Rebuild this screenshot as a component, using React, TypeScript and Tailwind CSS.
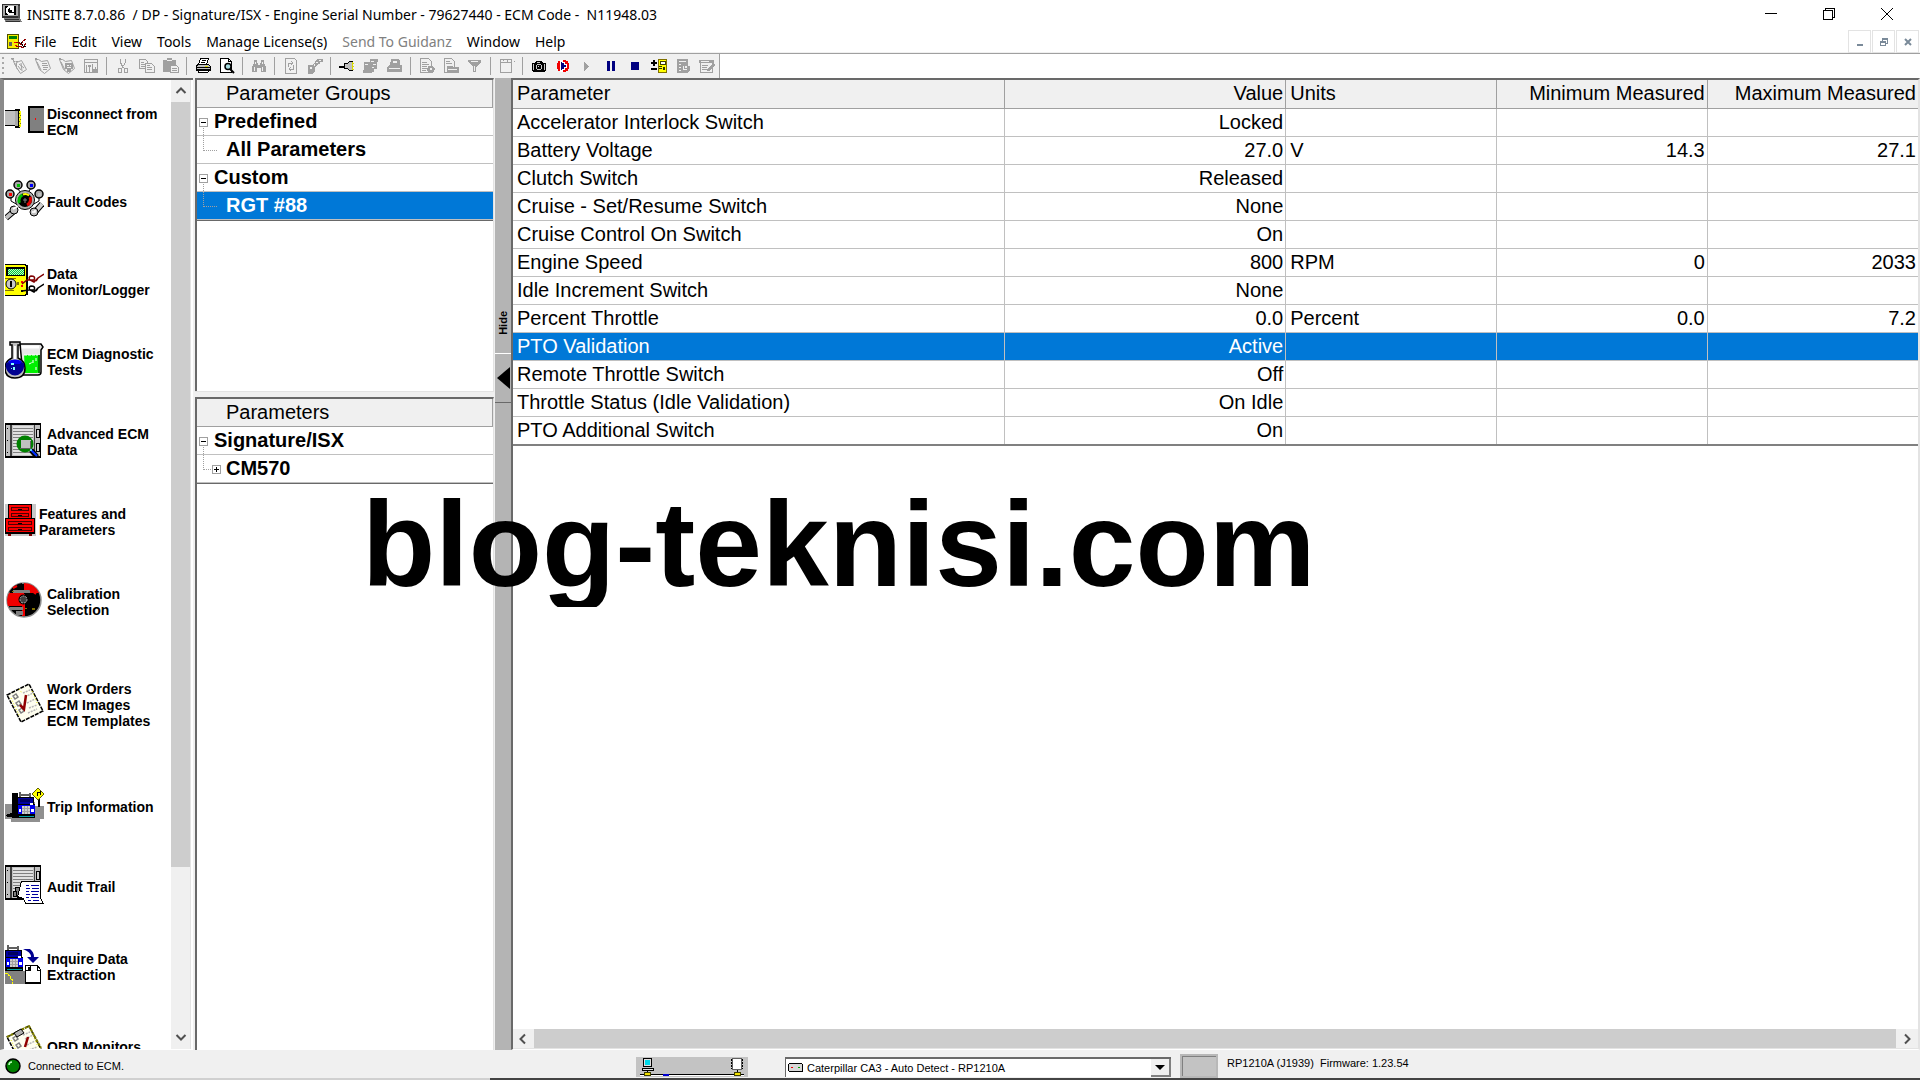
import React from "react";

type Glyph = () => React.ReactElement;

const G = "#a0a0a0";

/* ---------- toolbar glyphs (16 x 16) ---------- */

function Tool({ children }: { children: React.ReactNode }) {
  return (
    <svg width="16" height="16" viewBox="0 0 16 16" shapeRendering="crispEdges" fill="none" stroke={G} strokeWidth="1">
      {children}
    </svg>
  );
}

const ConnectA: Glyph = () => (
  <Tool>
    <path d="M0.5 1.5h2v2h2M5.5 4.5l5-2 5 9-6 4-4-6z M2.5 3.5l4 8M8 6l5 4M7 8l3 4M10 5l1 8M3 6l2 0" shapeRendering="auto" />
    <path d="M0 0h3v1h-3zM5 3h2v1h-2z" fill={G} stroke="none" />
  </Tool>
);
const ConnectB: Glyph = () => (
  <Tool>
    <path d="M0.5 1.5h3l3 2 6-1 3 8-6 5-5-4zM2 4l4 8" shapeRendering="auto" />
    <path d="M7 5h5v1h-5zM7 7h6v1h-6zM8 9h5v1h-5zM8 11h4v1h-4zM0 0h2v2h-2z" fill={G} stroke="none" />
  </Tool>
);
const ConnectC: Glyph = () => (
  <Tool>
    <path d="M0.5 1.5h3l3 2 6-1 3 8-6 5-5-4zM2 4l4 8" shapeRendering="auto" />
    <path d="M6 5h8v6h-8zM8 11h4v3h-4zM0 0h2v2h-2z" fill={G} stroke="none" />
    <path d="M8 7h2v1h-2zM11 7h1v1h-1zM8 9h4v1h-4z" fill="#f0f0f0" stroke="none" />
  </Tool>
);
const ChartFrame: Glyph = () => (
  <Tool>
    <path d="M1.5 1.5h13v13h-13zM1.5 4.5h13M3.5 7v7M6.5 8v6M9.5 6v8M12.5 9v5" />
    <path d="M5 7h3v2h-3zM9 11h5v3h-5z" fill={G} stroke="none" />
  </Tool>
);
const Cut: Glyph = () => (
  <Tool>
    <path d="M5.5 0.5v4l3 6M10.5 0.5v4l-4 6" />
    <path d="M3.5 10.5h3v4h-3zM9.5 10.5h3v4h-3z" />
  </Tool>
);
const Copy: Glyph = () => (
  <Tool>
    <path d="M0.5 1.5h6l2 2v7h-8zM2 4.500h3M2 6.500h4M2 8.500h4" />
    <path d="M6.500 5.500h6l3 3v6h-9z" fill="#f0f0f0" />
    <path d="M8 9.500h5M8 11.500h5M8 7.500h3" />
  </Tool>
);
const Paste: Glyph = () => (
  <Tool>
    <path d="M0 2h4v-2h5v2h4v12h-13z" fill={G} stroke="none" />
    <path d="M4 2h5v1h-5z" fill="#f0f0f0" stroke="none" />
    <path d="M7.500 7.500h6l2 2v5h-8zM9 10.500h5M9 12.500h5" fill="#f0f0f0" />
  </Tool>
);
const Printer: Glyph = () => (
  <Tool>
    <g stroke="#000">
      <path d="M5.500 0.500h8l-2 6h-8z" fill="#fff" />
      <path d="M7 2.500h4M6 4.500h4" />
      <path d="M2.500 6.500h11l2 2v4h-14v-4z" fill="#c0c0c0" />
      <path d="M1 9.500h14M3.500 12.500v2h9l2-2" fill="#fff" />
      <path d="M1 11.500h14" strokeWidth="2" />
    </g>
    <path d="M10 8h3v1h-3z" fill="#dede00" stroke="none" />
  </Tool>
);
const Preview: Glyph = () => (
  <Tool>
    <g stroke="#000">
      <path d="M1.500 0.500h8l3 3v11h-11z" fill="#fff" />
      <path d="M9.500 0.500v3h3" />
      <circle cx="9" cy="8.500" r="3" fill="#a9dfe3" shapeRendering="auto" strokeWidth="1.500" />
      <path d="M11 11l4 4" strokeWidth="2" shapeRendering="auto" />
    </g>
  </Tool>
);
const Binoculars: Glyph = () => (
  <Tool>
    <path d="M3 2h3v3h1v2h2v-2h1v-3h3v3l2 4v5h-5v-4h-4v4h-5v-5l2-4z" fill={G} stroke="none" />
    <path d="M3 9h1v4h-1zM11 9h1v4h-1zM4 4h1v2h-1zM11 4h1v2h-1z" fill="#f0f0f0" stroke="none" />
  </Tool>
);
const Refresh: Glyph = () => (
  <Tool>
    <path d="M2.500 0.500h9l2 2v13h-11z" />
    <path d="M5.500 9v-4h4M8 3l2 2-2 2M10.500 7v4h-4M8 9l-2 2 2 2" />
  </Tool>
);
const Wrench: Glyph = () => (
  <Tool>
    <path d="M1 7h5l4-6h6v3h-3v2h-2l-3 4v4l-3 2h-4v-4z" fill={G} stroke="none" />
    <path d="M9 4h2v1h-2zM3 9h2v2h-2zM7 6h1v2h-1zM12 2h2v1h-2z" fill="#f0f0f0" stroke="none" />
  </Tool>
);
const Plug: Glyph = () => (
  <Tool>
    <path d="M0 8.500h5" stroke="#000" strokeWidth="2" />
    <path d="M5.500 5.500h3l2-2h3v9h-3l-2-2h-3z" fill="#c0c0c0" stroke="#000" />
    <path d="M13 4h1v8h-1zM14 5h1v1h-1zM14 8h1v1h-1zM14 11h1v1h-1z" fill="#d8d800" stroke="none" />
  </Tool>
);
const Upload: Glyph = () => (
  <Tool>
    <path d="M1 4h6v10h-6zM7 1h8v3h-1v7h-3v3h-4zM0 12h9v3h-9z" fill={G} stroke="none" />
    <path d="M8 3h3v1h-3zM10 6h3v1h-3zM2 6h3v1h-3zM9 9h2v1h-2z" fill="#f0f0f0" stroke="none" />
  </Tool>
);
const PrintDim: Glyph = () => (
  <Tool>
    <path d="M4 1h7l2 2v4h2v7h-15v-5l3-2z" fill={G} stroke="none" />
    <path d="M6 3h4v2h-4zM2 10h11v1h-11z" fill="#f0f0f0" stroke="none" />
  </Tool>
);
const PageA: Glyph = () => (
  <Tool>
    <path d="M1.500 0.500h8l3 3v11h-11zM3 4.500h5M3 6.500h7M3 8.500h5M3 10.500h5M3 12.500h4" />
    <path d="M9 8h5l2 3-2 4h-4l-2-3z" fill={G} stroke="none" />
    <path d="M11 10h2v2h-2z" fill="#f0f0f0" stroke="none" />
  </Tool>
);
const PageB: Glyph = () => (
  <Tool>
    <path d="M1.500 0.500h7l3 3v11h-10zM3 3.500h4M3 5.500h6" />
    <path d="M4 8h5l1 1h6v6h-12z" fill={G} stroke="none" />
    <path d="M5 11h9v1h-9z" fill="#f0f0f0" stroke="none" />
  </Tool>
);
const Funnel: Glyph = () => (
  <Tool>
    <path d="M1 2h13v2l-5 5v5h-3v-5l-5-5z" fill={G} stroke="none" />
    <path d="M4 3h7v1h-7zM7 8h1v5h-1z" fill="#f0f0f0" stroke="none" />
  </Tool>
);
const Sheet: Glyph = () => (
  <Tool>
    <path d="M1.500 1.500h11v13h-11zM1.500 4.500h11M8.500 1v3M4 2.500h1M15 3.500h1" />
  </Tool>
);
const Camera: Glyph = () => (
  <Tool>
    <path d="M1 5h3l1-2h6l1 2h3v8h-1v1h-12v-1h-1v-8z" fill="#000" stroke="none" />
    <path d="M6 6h4v1h-4zM6 11h4v1h-4zM5 7h1v4h-1zM10 7h1v4h-1zM2 6h1v6h-1zM13 6h1v6h-1zM6 4h3v1h-3zM7 8h1v1h-1z" fill="#c8c8c8" stroke="none" />
  </Tool>
);
const Record: Glyph = () => (
  <Tool>
    <path d="M5 2h6v1h2v2h1v6h-1v2h-2v1h-6v-1h-2v-2h-1v-6h1v-2h2z" fill="#f00000" stroke="none" />
    <path d="M5 2h3v2h2v2h2v4h-2v2h-2v2h-3z" fill="#fff" stroke="none" />
    <path d="M6 4h1v1h2v2h2v2h-2v2h-2v1h-1z" fill="#000080" stroke="none" />
  </Tool>
);
const Play: Glyph = () => (
  <Tool>
    <path d="M5 3v11l5-5.500z" fill={G} stroke="none" />
  </Tool>
);
const Pause: Glyph = () => (
  <Tool>
    <path d="M4 3h3v10h-3zM9 3h3v10h-3z" fill="#000080" stroke="none" />
  </Tool>
);
const Stop: Glyph = () => (
  <Tool>
    <path d="M4 4h8v8h-8z" fill="#000080" stroke="none" />
  </Tool>
);
const MeterTool: Glyph = () => (
  <Tool>
    <path d="M0 4h6v2h-6zM2 2h2v6h-2zM0 10h6v2h-6z" fill="#000" stroke="none" />
    <path d="M7.500 1.500h8v13h-8z" fill="#ffff00" stroke="#807000" />
    <path d="M9 3h5v3h-5z" fill="#fff" stroke="#404000" />
    <path d="M8 8h3v1h-3zM8 10h3v1h-3zM12 9h2v3h-2z" fill="#303000" stroke="none" />
  </Tool>
);
const MeterDim: Glyph = () => (
  <Tool>
    <path d="M2 1h11v7h2v4l-2 3h-11z" fill={G} stroke="none" />
    <path d="M4 3h7v1h-7zM4 6h2v1h-2zM8 8h4v4h-4zM4 9h2v1h-2zM4 12h2v1h-2z" fill="#f0f0f0" stroke="none" />
    <path d="M9.500 8v2.500h2" />
  </Tool>
);
const NoteEdit: Glyph = () => (
  <Tool>
    <path d="M1.500 3.500h12v11h-12zM3 7.500h6M3 9.500h5M3 11.500h5" />
    <path d="M0 2h15v3h-15zM14 5l2 2-6 6h-2v-2z" fill={G} stroke="none" />
    <path d="M2 3h8v1h-8z" fill="#f0f0f0" stroke="none" />
  </Tool>
);

const toolGroups: { name: string; glyph: Glyph }[][] = [
  [
    { name: "Connect", glyph: ConnectA },
    { name: "Template", glyph: ConnectB },
    { name: "Work order", glyph: ConnectC },
    { name: "Chart", glyph: ChartFrame },
  ],
  [
    { name: "Cut", glyph: Cut },
    { name: "Copy", glyph: Copy },
    { name: "Paste", glyph: Paste },
  ],
  [
    { name: "Print", glyph: Printer },
    { name: "Print preview", glyph: Preview },
  ],
  [{ name: "Find", glyph: Binoculars }],
  [
    { name: "Refresh", glyph: Refresh },
    { name: "Adjust", glyph: Wrench },
  ],
  [
    { name: "Disconnect", glyph: Plug },
    { name: "Send to ECM", glyph: Upload },
    { name: "Print to file", glyph: PrintDim },
  ],
  [
    { name: "Report", glyph: PageA },
    { name: "Open report", glyph: PageB },
    { name: "Filter", glyph: Funnel },
  ],
  [{ name: "New window", glyph: Sheet }],
  [
    { name: "Snapshot", glyph: Camera },
    { name: "Record", glyph: Record },
    { name: "Play", glyph: Play },
    { name: "Pause", glyph: Pause },
    { name: "Stop", glyph: Stop },
    { name: "Monitor setup", glyph: MeterTool },
    { name: "Monitor timer", glyph: MeterDim },
    { name: "Edit note", glyph: NoteEdit },
  ],
];

/* ---------- side bar pictures ---------- */

const DisconnectPic: Glyph = () => (
  <svg width="39" height="28" viewBox="0 0 39 28" shapeRendering="crispEdges">
    <path d="M0 5h10v14h-10z" fill="#c0c0c0" />
    <path d="M0 4h10v-1h5v19h-5v-2h-10v-1h10v-14h-10z" fill="#000" />
    <path d="M10 5h3v15h-3z" fill="#a8a8a8" />
    <path d="M14 5h2v16h-2z" fill="#ffff00" />
    <path d="M14 7h1v1h-1zM15 9h1v1h-1zM14 11h1v1h-1zM15 13h1v1h-1zM14 15h1v1h-1zM15 17h1v1h-1zM14 19h1v1h-1z" fill="#808000" />
    <path d="M23 0h16v2h-14v23h14v2h-16z" fill="#000" />
    <path d="M25 2h14v23h-14z" fill="#808080" />
    <path d="M30 12h1v2h-1z" fill="#ff0000" />
  </svg>
);

const FaultPic: Glyph = () => (
  <svg width="39" height="41" viewBox="0 0 39 41">
    <path d="M6 15v6l7 4M34 15v6l-7 4M12 8l5 6M26 8l-4 6" stroke="#000" fill="none" />
    {[
      [5, 14, "#ff0000"],
      [13, 5, "#00c000"],
      [26, 5, "#0000ff"],
      [34, 14, "#c0c0c0"],
    ].map(([x, y, c]) => (
      <g key={String(x)}>
        <circle cx={x} cy={y} r="4" fill="#a8a8a8" stroke="#000" strokeWidth="1.500" />
        <path d={`M${Number(x) - 1} ${Number(y) - 1}h3v3h-3z`} fill={String(c)} />
      </g>
    ))}
    <circle cx="20" cy="20" r="9.500" fill="#b0b0b0" stroke="#000" strokeWidth="1" />
    <circle cx="20" cy="20" r="7" fill="#000" />
    <path d="M14.500 23a6 6 0 0 1 3-8" stroke="#00c000" strokeWidth="3" fill="none" />
    <path d="M18 14.500a6 6 0 0 1 6 1" stroke="#ffff00" strokeWidth="2" fill="none" />
    <path d="M25 17a6 6 0 0 1-3 8" stroke="#e00000" strokeWidth="3" fill="none" />
    <path d="M20 18v5M18 20h4" stroke="#808080" strokeWidth="1" />
    <path d="M1 38l7-6" stroke="#000" strokeWidth="6" />
    <path d="M1 38l7-6" stroke="#c0c0c0" strokeWidth="4" />
    <circle cx="9" cy="30" r="4" fill="#c0c0c0" stroke="#000" />
    <path d="M8 29l5-3" stroke="#fff" strokeWidth="2" />
    <path d="M30 32l7-8" stroke="#000" strokeWidth="6" />
    <path d="M30 32l7-8" stroke="#d0d0d0" strokeWidth="4" />
    <circle cx="29" cy="32" r="4" fill="#c0c0c0" stroke="#000" />
    <path d="M27 32h3v-2" stroke="#fff" strokeWidth="1.500" fill="none" />
  </svg>
);

const MeterPic: Glyph = () => (
  <svg width="39" height="32" viewBox="0 0 39 32" shapeRendering="crispEdges">
    <path d="M0 0h21v1h2v30h-2v1h-21z" fill="#000" />
    <path d="M0 1h20v1h1v28h-1v1h-20z" fill="#ffff00" />
    <path d="M1 3h19v9h-19z" fill="#000" />
    <path d="M3 5h16v6h-16z" fill="#c0ffc0" />
    <path d="M3 5.500h16M3 7.500h16M3 9.500h16" stroke="#00c040" strokeDasharray="1 1" />
    <path d="M4 6.500h15M4 8.500h15M4 10.500h15" stroke="#00c040" strokeDasharray="1 1" />
    <path d="M0 14.500h11M0 26.500h9" stroke="#807000" />
    <circle cx="6" cy="20" r="5" fill="#c8c8c8" stroke="#000" shapeRendering="auto" />
    <path d="M5 17h2v6h-2z" fill="#000" />
    <path d="M12 18h2v3h-2z" fill="#807000" />
    <path d="M16 17h2v2h-2zM16 21h2v2h-2z" fill="#ff0000" />
    <path d="M16 26h2v2h-2z" fill="#000" />
    <g fill="none" shapeRendering="auto" strokeWidth="1.500">
      <path d="M17 20l5-4h7q2-4-3-4-3 1-1 4l4 2 4-4 6-4M33 14l-2 3" stroke="#800000" />
      <path d="M17 27l7-1h5q2-4-3-4-3 1-1 4l4 2 4-4 6-4M33 24l-2 3" stroke="#000" />
    </g>
  </svg>
);

const FlaskPic: Glyph = () => (
  <svg width="39" height="38" viewBox="0 0 39 38">
    <path d="M15 3h21l2 3-2 3v22q0 3-3 3H18z" fill="#e8e8e8" stroke="#000" strokeWidth="1.500" />
    <path d="M17 6h17" stroke="#fff" strokeWidth="3" />
    <path d="M19 14h15v16q0 2-2 2H20z" fill="#00f000" />
    <path d="M19 14h14M31 17v4M28 19v3M24 23l4-2M31 26v3" stroke="#fff" strokeDasharray="3 1" />
    <path d="M34 14v18" stroke="#008000" strokeWidth="2" />
    <path d="M5 1h10v3h-2v13q7 3 7 10 0 10-10 10T0 27q0-7 7-10V4H5z" fill="#c0c0c0" stroke="#000" strokeWidth="1.500" />
    <path d="M9 5h2v13H9z" fill="#fff" />
    <path d="M1 22q9-5 18 0 1 6-3 10-6 5-12 0-4-4-3-10z" fill="#000090" />
    <path d="M3 20q7-3 14 0l-2 3H5z" fill="#0000f0" />
    <path d="M6 22h3v2H6zM8 26h2v3H8zM6 27h1v1H6z" fill="#80ffff" />
  </svg>
);

const EcmBody = () => (
  <>
    <path d="M0 0h36v35H0z" fill="#000" />
    <path d="M1 2h34v31H1z" fill="#c0c0c0" />
    <path d="M5 2h2v31H5zM29 2h1v31h-1z" fill="#404040" />
    <path d="M8 3h20v29H8z" fill="#e0e0e0" />
    <path d="M8 5.500h20M8 8.500h20M8 11.500h20M8 14.500h20M8 17.500h20M8 20.500h20M8 23.500h20M8 26.500h20M8 29.500h20" stroke="#808080" />
    <path d="M2 5h1v1H2zM2 17h1v1H2zM2 29h1v1H2z" fill="#000" />
    <path d="M31.500 6.500h3v8h-3zM31.500 20.500h3v8h-3z" fill="#d0d0d0" stroke="#000" />
  </>
);

const AdvancedPic: Glyph = () => (
  <svg width="39" height="35" viewBox="0 0 39 35" shapeRendering="crispEdges">
    <EcmBody />
    <circle cx="20" cy="21" r="8.500" fill="#008000" shapeRendering="auto" />
    <path d="M16 17h10v8H16z" fill="#c0c0c0" />
    <path d="M15 25h10v-7" stroke="#606060" fill="none" strokeWidth="1" />
    <path d="M26 27l6 7" stroke="#000" strokeWidth="5" shapeRendering="auto" />
    <path d="M26 27l6 6" stroke="#0030ff" strokeWidth="2" shapeRendering="auto" />
    <path d="M25 26h2v2h-2z" fill="#60d0ff" />
  </svg>
);

const DrawersPic: Glyph = () => (
  <svg width="31" height="32" viewBox="0 0 31 32" shapeRendering="crispEdges">
    <path d="M0 0h31v32H0z" fill="#c8c8c8" />
    <path d="M3 0h24v14h3v16H0V14h3z" fill="#000" />
    <path d="M4 1h22v13H4zM1 15h28v13H1z" fill="#ff0000" />
    <path d="M6.500 3.500h17v3h-17zM6.500 9.500h17v3h-17zM3.500 17.500h23v3h-23zM3.500 23.500h23v3h-23z" fill="#f00000" stroke="#500000" />
    <path d="M13 5h4v1h-4zM13 11h4v1h-4zM13 19h4v1h-4zM13 25h4v1h-4z" fill="#000" />
    <path d="M3 30h3v2H3zM24 30h3v2h-3z" fill="#800000" />
  </svg>
);

const DiscPic: Glyph = () => (
  <svg width="39" height="36" viewBox="0 0 39 36">
    <circle cx="19" cy="18" r="17" fill="#000" stroke="#909090" strokeWidth="1.500" />
    <path d="M19 1a17 17 0 0 1 15 10H4a17 17 0 0 0-1 13h14v10a17 17 0 0 0 3 0V12h-1z" fill="#f00000" />
    <path d="M4 10q5-8 13-9v10z" fill="#000" />
    <path d="M8 8h17v3H8zM5 25h13v3H5zM11 29h7v4h-7z" fill="#808080" />
    <path d="M23 6l8 6M8 6l4-2" stroke="#f00000" strokeWidth="2" />
    <path d="M27 26h3v2h-3zM7 9h2v1H7zM20 26h2v1h-2z" fill="#807000" />
    <circle cx="18.500" cy="17.500" r="5" fill="#000" />
    <circle cx="18.500" cy="17.500" r="3.500" fill="#404040" stroke="#b0b0b0" strokeDasharray="2 1" />
  </svg>
);

const ClipPage = () => (
  <>
    <path d="M2 12L24 1l14 27-22 11z" fill="#fffff0" stroke="#000" strokeWidth="1.500" strokeDasharray="4 1" />
    <path d="M8 13l3-2 2 3-3 2zM11 20l3-2 2 3-3 2zM14 27l3-2 2 3-3 2z" fill="none" stroke="#808080" strokeWidth="1.500" />
    <path d="M18 10l7-3M20 14l8-4M22 20l8-4M24 25l8-3M23 30l9-4" stroke="#b8b8b8" strokeWidth="1.500" strokeDasharray="2 1" />
    <path d="M6 15l9 19M14 6l3 4M27 8l6 14" stroke="#e8e800" strokeDasharray="1 2" />
  </>
);

const WorkPic: Glyph = () => (
  <svg width="39" height="40" viewBox="0 0 39 40">
    <ClipPage />
    <path d="M15 22l4 4 2-14" stroke="#900000" strokeWidth="2.500" fill="none" />
  </svg>
);

const Truck = () => (
  <>
    <path d="M3 6V1h1M13 6V1M3 3h10" stroke="#606060" fill="none" strokeWidth="2" />
    <path d="M0 5h17v5l1 3v13H0z" fill="#000" />
    <path d="M1 6h15v6H1z" fill="#0000a0" />
    <path d="M3 7h10v3H3z" fill="#000060" />
    <path d="M1 13h17v9H1z" fill="#0000f0" />
    <path d="M5 14h8v8H5z" fill="#d0d0d0" />
    <path d="M7.500 14v8M10.500 14v8M5 16.500h8M5 19.500h8" stroke="#a0a0a0" />
    <path d="M2 17h2v3H2zM14 17h3v3h-3zM13 11h3v2h-3z" fill="#fff" />
    <path d="M2 24h15v1H2z" fill="#00a0a0" />
  </>
);

const TripPic: Glyph = () => (
  <svg width="39" height="34" viewBox="0 0 39 34" shapeRendering="crispEdges">
    <path d="M0 16h8v-2h22v4h9v13h-4v3H6v-3H0z" fill="#909090" />
    <path d="M0 27l6-2h2v4H3z" fill="#000" />
    <path d="M7 5h6v25H7z" fill="#000" />
    <g transform="translate(12 4)">
      <Truck />
    </g>
    <path d="M33.500 11v8" stroke="#000" strokeWidth="2" />
    <path d="M33 0l6 6-6 6-6-6z" fill="#ffff00" stroke="#606000" shapeRendering="auto" />
    <path d="M32.500 8V4.500h3M35.500 3v4" stroke="#000" fill="none" />
  </svg>
);

const AuditPic: Glyph = () => (
  <svg width="39" height="40" viewBox="0 0 39 40" shapeRendering="crispEdges">
    <EcmBody />
    <path d="M0 35h18v5H0zM30 17h8v6h-8z" fill="#fff" />
    <path d="M10 22h8v10h-6zM8 26h3v5H8z" fill="#808080" stroke="#000" />
    <path d="M16.500 16.500h19v17l3 5h-18l-2-5-6-2z" fill="#fff" stroke="#000" />
    <path d="M21 20.500h3M26 20.500h8M21 23.500h4M27 23.500h7M21 26.500h3M26 26.500h8M21 29.500h4M27 29.500h6M21 32.500h3M26 32.500h8M23 35.500h3M28 35.500h6" stroke="#0000a0" />
  </svg>
);

const InquirePic: Glyph = () => (
  <svg width="39" height="40" viewBox="0 0 39 40" shapeRendering="crispEdges">
    <path d="M0 26h20v13H0z" fill="#808080" />
    <path d="M0 28h3v2h2v4h2v5" stroke="#ffff00" fill="none" strokeDasharray="3 1" />
    <Truck />
    <path d="M18 4h7q4 3 4 8h5l-6 6-6-6h4q0-5-8-8z" fill="#000090" shapeRendering="auto" />
    <path d="M20.500 20.500h12l3 4v13h-15z" fill="#fff" stroke="#000" />
    <path d="M32 20v5h4M20 38h16" stroke="#000" fill="none" strokeWidth="1" />
    <path d="M20.500 20.500h5v5h-5zM23 22h1v2h-1z" fill="#fff" stroke="#000" />
  </svg>
);

const ObdPic: Glyph = () => (
  <svg width="39" height="40" viewBox="0 0 39 40">
    <ClipPage />
    <path d="M2 12L24 1l12 22" fill="none" stroke="#808000" strokeWidth="2" strokeDasharray="3 1" />
    <path d="M9 8l7-4 3 4-7 4z" fill="#b0b0b0" stroke="#000" />
    <path d="M20 22l3-10" stroke="#900000" strokeWidth="2.500" />
  </svg>
);

const sideItems: { lines: string[]; pic: Glyph; tall?: boolean }[] = [
  { lines: ["Disconnect from", "ECM"], pic: DisconnectPic },
  { lines: ["Fault Codes"], pic: FaultPic },
  { lines: ["Data", "Monitor/Logger"], pic: MeterPic },
  { lines: ["ECM Diagnostic", "Tests"], pic: FlaskPic },
  { lines: ["Advanced ECM", "Data"], pic: AdvancedPic },
  { lines: ["Features and", "Parameters"], pic: DrawersPic },
  { lines: ["Calibration", "Selection"], pic: DiscPic },
  { lines: ["Work Orders", "ECM Images", "ECM Templates"], pic: WorkPic, tall: true },
  { lines: ["Trip Information"], pic: TripPic },
  { lines: ["Audit Trail"], pic: AuditPic },
  { lines: ["Inquire Data", "Extraction"], pic: InquirePic },
  { lines: ["OBD Monitors"], pic: ObdPic },
];

const menus = ["File", "Edit", "View", "Tools", "Manage License(s)", "Send To Guidanz", "Window", "Help"];

const rows: { name: string; value: string; units?: string; min?: string; max?: string; selected?: boolean }[] = [
  { name: "Accelerator Interlock Switch", value: "Locked" },
  { name: "Battery Voltage", value: "27.0", units: "V", min: "14.3", max: "27.1" },
  { name: "Clutch Switch", value: "Released" },
  { name: "Cruise - Set/Resume Switch", value: "None" },
  { name: "Cruise Control On Switch", value: "On" },
  { name: "Engine Speed", value: "800", units: "RPM", min: "0", max: "2033" },
  { name: "Idle Increment Switch", value: "None" },
  { name: "Percent Throttle", value: "0.0", units: "Percent", min: "0.0", max: "7.2" },
  { name: "PTO Validation", value: "Active", selected: true },
  { name: "Remote Throttle Switch", value: "Off" },
  { name: "Throttle Status (Idle Validation)", value: "On Idle" },
  { name: "PTO Additional Switch", value: "On" },
];

function AppIcon() {
  return (
    <svg width="20" height="20" viewBox="0 0 20 20" shapeRendering="crispEdges">
      <path d="M0 0h18v14H0z" fill="#303030" />
      <path d="M1 1h15v11H1z" fill="#a8a8a8" />
      <path d="M3 2h11v9H3z" fill="#000" />
      <path d="M12 3H7L5 5v3l2 2h5M8 5h3v3" fill="none" stroke="#fff" strokeWidth="1.500" />
      <path d="M2 14h16l2 4H3z" fill="#808080" />
      <path d="M3 15h14M4 17h14" stroke="#303030" />
      <path d="M16 2h2v12h-2z" fill="#505050" />
    </svg>
  );
}

function MenuIcon() {
  return (
    <svg width="20" height="16" viewBox="0 0 20 16" shapeRendering="crispEdges">
      <path d="M0 0h12v15H0z" fill="#505000" />
      <path d="M1 1h10v13H1z" fill="#f8f000" />
      <path d="M2 2h8v3H2z" fill="#008000" />
      <path d="M2 8h3v4H2z" fill="#606060" />
      <path d="M7 8h2v1H7zM8 11h2v1H8z" fill="#f00000" />
      <path d="M9 8h3l2 3 2-4 3-2M9 12h4l3 2 3-5" stroke="#900000" fill="none" />
      <path d="M14 8l2 4 3 1" stroke="#000" fill="none" />
    </svg>
  );
}

function Chevron({ d }: { d: string }) {
  return (
    <svg width="12" height="12" viewBox="0 0 12 12" fill="none" stroke="#505050" strokeWidth="2">
      <path d={d} />
    </svg>
  );
}

function TreeMark({ kind }: { kind: "open" | "leaf" | "closed" }) {
  return (
    <svg width="26" height="28" viewBox="0 0 26 28" shapeRendering="crispEdges" className="block shrink-0">
      {kind === "open" ? (
        <>
          <path d="M2.500 10.500h8v8h-8z" fill="#fff" stroke={G} />
          <path d="M4 14.500h5" stroke="#000" />
          <path d="M6.500 20v8" stroke={G} strokeDasharray="1 1" />
        </>
      ) : (
        <path d={kind === "leaf" ? "M6.500 0v15M7 14.500h13" : "M6.500 0v15M7 14.500h8"} stroke={G} strokeDasharray="1 1" />
      )}
      {kind === "closed" && (
        <>
          <path d="M15.500 10.500h8v8h-8z" fill="#fff" stroke={G} />
          <path d="M17 14.500h5M19.500 12v5" stroke="#000" />
        </>
      )}
    </svg>
  );
}

function TreePanel({
  title,
  nodes,
}: {
  title: string;
  nodes: { label: string; kind: "open" | "leaf" | "closed"; selected?: boolean }[];
}) {
  return (
    <div className="h-full border-t-2 border-l-2 border-t-[#696969] border-l-[#696969] border-r border-r-[#e3e3e3] bg-white">
      <h2 className="h-7 border-b border-r border-[#a0a0a0] bg-[#f0f0f0] pl-[29px] leading-[27px]">{title}</h2>
      <ul className="border-b border-[#696969] font-bold">
        {nodes.map((n) => (
          <li
            key={n.label}
            className={
              n.selected
                ? "flex h-7 items-center border-b border-[#c0c0c0] bg-[#0078d7] text-white"
                : "flex h-7 items-center border-b border-[#c0c0c0]"
            }
          >
            <div className={n.kind === "open" ? "flex w-4 overflow-hidden" : "flex w-[29px]"}>
              <TreeMark kind={n.kind} />
            </div>
            <span className={n.kind === "open" ? "pl-px leading-[27px]" : "leading-[27px]"}>{n.label}</span>
          </li>
        ))}
      </ul>
    </div>
  );
}

export default function App() {
  return (
    <div className="relative flex h-screen flex-col overflow-hidden bg-white font-['Liberation_Sans',Arial,sans-serif] text-black">
      <header className="flex h-7 shrink-0 items-center pl-[2px] font-['Noto_Sans','Segoe_UI',sans-serif] text-[14px]">
        <AppIcon />
        <h1 className="ml-[5px] flex-1 whitespace-pre">
          INSITE 8.7.0.86{"  "}/ DP - Signature/ISX - Engine Serial Number - 79627440 - ECM Code -{"  "}N11948.03
        </h1>
        <div className="flex pr-1">
          <button aria-label="Minimize" className="flex h-7 w-[58px] items-center justify-center">
            <svg width="12" height="12" viewBox="0 0 12 12" stroke="#000" shapeRendering="crispEdges"><path d="M0 5.500h12" /></svg>
          </button>
          <button aria-label="Restore" className="flex h-7 w-[58px] items-center justify-center">
            <svg width="12" height="12" viewBox="0 0 12 12" fill="none" stroke="#000" shapeRendering="crispEdges"><path d="M0.500 2.500h9v9h-9zM2.500 2.500v-2h9v9h-2" /></svg>
          </button>
          <button aria-label="Close" className="flex h-7 w-[58px] items-center justify-center">
            <svg width="12" height="12" viewBox="0 0 12 12" stroke="#000"><path d="M0 0l12 12M12 0L0 12" /></svg>
          </button>
        </div>
      </header>

      <nav className="flex h-[25px] shrink-0 items-center border-b border-[#f0f0f0] pt-[3px] pl-[7px] font-['Noto_Sans','Segoe_UI',sans-serif] text-[14px]">
        <MenuIcon />
        <div className="ml-[7px] flex flex-1 gap-[15px]">
          {menus.map((m) => (
            <button key={m} className={m === "Send To Guidanz" ? "whitespace-nowrap text-[#808080]" : "whitespace-nowrap"}>
              {m}
            </button>
          ))}
        </div>
        <div className="flex gap-px pr-px">
          <button aria-label="Minimize window" className="flex size-[23px] items-center justify-center border border-[#e3e3e3]">
            <svg width="10" height="10" viewBox="0 0 10 10" shapeRendering="crispEdges"><path d="M2 7h6v2H2z" fill="#7a8a99" /></svg>
          </button>
          <button aria-label="Restore window" className="flex size-[23px] items-center justify-center border border-[#e3e3e3]">
            <svg width="10" height="10" viewBox="0 0 10 10" fill="none" stroke="#7a8a99" shapeRendering="crispEdges"><path d="M1.500 5.500h5v3h-5zM1 4.500h6M3.500 4v-2h5v4H7M3 1.500h6" /></svg>
          </button>
          <button aria-label="Close window" className="flex size-[23px] items-center justify-center border border-[#e3e3e3]">
            <svg width="10" height="10" viewBox="0 0 10 10" stroke="#7a8a99" strokeWidth="2"><path d="M2 2l6 6M8 2L2 8" /></svg>
          </button>
        </div>
      </nav>

      <div className="flex h-[25px] shrink-0 border-t border-[#a0a0a0]">
        <div className="flex items-center border-r border-[#a0a0a0] bg-[#f0f0f0] pl-px" role="toolbar" aria-label="Main toolbar">
          <svg width="6" height="20" viewBox="0 0 6 20" shapeRendering="crispEdges">
            <path d="M2 1v19" stroke="#a8a8a8" strokeWidth="2" strokeDasharray="2 3" />
          </svg>
          {toolGroups.map((group, i) => (
            <React.Fragment key={group[0].name}>
              {i > 0 && <div className="mr-[4px] ml-[3px] h-[18px] w-px bg-[#a0a0a0]" />}
              {group.map(({ name, glyph: Icon }) => (
                <button key={name} aria-label={name} className="flex h-6 w-6 items-center justify-center">
                  <Icon />
                </button>
              ))}
            </React.Fragment>
          ))}
        </div>
      </div>

      <main className="flex min-h-0 flex-1 bg-[#f0f0f0]">
        <aside className="flex w-[193px] shrink-0 border-t-2 border-b border-l-4 border-t-[#696969] border-b-white border-l-[#8a8a8a]">
          <nav className="flex-1 overflow-hidden bg-white">
            <ul className="flex flex-col pt-[2px] text-[14px] leading-4 font-bold">
              {sideItems.map(({ lines, pic: Pic, tall }) => (
                <li key={lines[0]} className={tall ? "h-[125px] shrink-0" : "h-20 shrink-0"}>
                  <button className="flex h-full w-full items-center gap-[3px] pl-px text-left">
                    <span className="mb-1">
                      <Pic />
                    </span>
                    <span className="whitespace-nowrap">
                      {lines.map((l) => (
                        <span key={l} className="block">{l}</span>
                      ))}
                    </span>
                  </button>
                </li>
              ))}
            </ul>
          </nav>
          <div className="flex w-[19px] shrink-0 flex-col bg-[#f0f0f0]">
            <button aria-label="Scroll up" className="flex h-[22px] items-center justify-center">
              <Chevron d="M1.500 8l4.500-4.500L10.500 8" />
            </button>
            <div className="flex flex-1 flex-col">
              <div className="grow-[766] bg-[#cdcdcd]" />
              <div className="grow-[158]" />
            </div>
            <button aria-label="Scroll down" className="flex h-[24px] items-center justify-center">
              <Chevron d="M1.500 4l4.500 4.500L10.500 4" />
            </button>
          </div>
          <div className="w-[3px] border-l border-[#e3e3e3] bg-white" />
        </aside>

        <div className="ml-[2px] flex w-[299px] shrink-0 flex-col text-[20px]">
          <section className="h-[314px] border-b border-[#e3e3e3]">
            <TreePanel
              title="Parameter Groups"
              nodes={[
                { label: "Predefined", kind: "open" },
                { label: "All Parameters", kind: "leaf" },
                { label: "Custom", kind: "open" },
                { label: "RGT #88", kind: "leaf", selected: true },
              ]}
            />
          </section>
          <section className="mt-[5px] min-h-0 flex-1">
            <TreePanel
              title="Parameters"
              nodes={[
                { label: "Signature/ISX", kind: "open" },
                { label: "CM570", kind: "closed" },
              ]}
            />
          </section>
        </div>

        <div className="ml-px flex w-4 shrink-0 flex-col bg-[#b4b4b4]">
          <div className="flex h-[276px] items-end justify-center border-b border-white pb-[18px]">
            <span className="rotate-180 text-[11px] leading-none font-bold [writing-mode:vertical-rl]">Hide</span>
          </div>
          <button aria-label="Hide panel" className="flex h-[49px] items-center justify-center border-b border-[#696969]">
            <svg width="13" height="22" viewBox="0 0 13 22"><path d="M13 0v22L0 11z" /></svg>
          </button>
        </div>

        <section className="flex min-w-0 flex-1 flex-col border-t-2 border-r-2 border-b border-l-2 border-t-[#696969] border-r-[#e3e3e3] border-b-white border-l-[#696969] bg-white">
          <table className="w-full table-fixed border-collapse text-[20px] leading-[27px]">
            <colgroup>
              <col className="w-[35%]" />
              <col className="w-[20%]" />
              <col className="w-[15%]" />
              <col className="w-[15%]" />
              <col className="w-[15%]" />
            </colgroup>
            <thead>
              <tr className="h-7 border-b border-[#a0a0a0] bg-[#f0f0f0]">
                <th className="border-r border-[#a0a0a0] p-0 pl-1 text-left font-normal">Parameter</th>
                <th className="border-r border-[#a0a0a0] p-0 pr-[2px] text-right font-normal">Value</th>
                <th className="border-r border-[#a0a0a0] p-0 pl-1 text-left font-normal">Units</th>
                <th className="border-r border-[#a0a0a0] p-0 pr-[2px] text-right font-normal">Minimum Measured</th>
                <th className="p-0 pr-[2px] text-right font-normal">Maximum Measured</th>
              </tr>
            </thead>
            <tbody className="border-b-2 border-[#808080]">
              {rows.map((r) => (
                <tr
                  key={r.name}
                  className={r.selected ? "h-7 border-b border-[#c0c0c0] bg-[#0078d7] text-white" : "h-7 border-b border-[#c0c0c0]"}
                >
                  <td className="border-r border-[#c0c0c0] p-0 pl-1">{r.name}</td>
                  <td className="border-r border-[#c0c0c0] p-0 pr-[2px] text-right">{r.value}</td>
                  <td className="border-r border-[#c0c0c0] p-0 pl-1">{r.units}</td>
                  <td className="border-r border-[#c0c0c0] p-0 pr-[2px] text-right">{r.min}</td>
                  <td className="p-0 pr-[2px] text-right">{r.max}</td>
                </tr>
              ))}
            </tbody>
          </table>
          <div className="flex-1" />
          <div className="flex h-[19px] bg-[#f0f0f0]">
            <button aria-label="Scroll left" className="flex w-[21px] items-center justify-center pr-[2px]">
              <Chevron d="M8 1.500L3.500 6 8 10.500" />
            </button>
            <div className="flex-1 bg-[#cdcdcd]" />
            <button aria-label="Scroll right" className="flex w-[22px] items-center justify-center">
              <Chevron d="M4 1.500L8.500 6 4 10.500" />
            </button>
          </div>
          <div className="h-px bg-[#e3e3e3]" />
        </section>
      </main>

      <footer className="flex h-7 shrink-0 items-center bg-[#f0f0f0] pt-1 text-[11px]">
        <div className="flex w-[636px] shrink-0 items-center gap-[7px] pl-[5px]">
          <svg width="16" height="16" viewBox="0 0 16 16">
            <circle cx="8" cy="8" r="7" fill="#008000" stroke="#000" strokeWidth="1.500" />
            <path d="M4 7q0-3 3-3" stroke="#c0ffc0" strokeWidth="1.500" fill="none" />
          </svg>
          <span>Connected to ECM.</span>
        </div>
        <svg width="112" height="20" viewBox="0 0 112 20" shapeRendering="crispEdges" className="mt-[2px] shrink-0 bg-[#c3c3c3]">
          <path d="M4 17h104v2H4z" fill="#fff" />
          <path d="M4 17.500h104" stroke="#000" />
          <path d="M7.500 1.500h8v8h-8zM6 11.500h11v2H6z" fill="#e0e0e0" stroke="#000" />
          <path d="M9 3h5v5H9z" fill="#00d8e8" />
          <path d="M96.500 1.500h9v11h-9z" fill="#fff" stroke="#606060" />
          <path d="M95.500 2v10M106.500 2v10" stroke="#000" strokeDasharray="2 1" />
          <path d="M11.500 13v3M101.500 13v3" stroke="#000" />
          <path d="M8.500 15.500h6v3h-6zM98.500 15.500h6v3h-6z" fill="#f0e000" stroke="#404000" />
          <path d="M27 17h6v2h-6z" fill="#0000d0" />
        </svg>
        <div className="mt-[2px] ml-[37px] flex h-5 w-[386px] shrink-0 items-center border-t-2 border-l border-[#696969] bg-white">
          <svg width="16" height="12" viewBox="0 0 16 12" shapeRendering="crispEdges" className="ml-[2px] shrink-0">
            <path d="M1.500 1.500h12l1 1v7h-13l-1-1v-6z" fill="#d8d8d8" stroke="#000" />
            <path d="M3 5h2v1H3z" fill="#f00000" />
            <path d="M10 5h2v1h-2z" fill="#00a000" />
          </svg>
          <select aria-label="Adapter" className="h-full flex-1 appearance-none bg-white pl-[3px] text-[11px]" defaultValue="ca3">
            <option value="ca3">Caterpillar CA3 - Auto Detect - RP1210A</option>
          </select>
          <span className="pointer-events-none flex h-full w-5 items-center justify-center border-r-2 border-b-2 border-[#808080] bg-[#f0f0f0]">
            <svg width="10" height="5" viewBox="0 0 10 5"><path d="M0 0h10L5 5z" /></svg>
          </span>
        </div>
        <div className="ml-[9px] h-6 w-[38px] shrink-0 border-2 border-[#b8b8b8] bg-[#c3c3c3] shadow-[inset_1px_1px_0_#808080]" />
        <span className="mb-[5px] ml-[9px] whitespace-pre">RP1210A (J1939){"  "}Firmware: 1.23.54</span>
      </footer>
      <div className="flex h-[2px] shrink-0">
        <div className="w-[60px] bg-[#404040]" />
        <div className="w-[430px] bg-[#d0d0d0]" />
        <div className="flex-1 bg-[#444]" />
      </div>

      <p className="pointer-events-none absolute top-[484px] left-[362px] h-[123px] overflow-hidden text-[120px] leading-[120px] font-bold whitespace-nowrap">
        blog-teknisi.com
      </p>
    </div>
  );
}
